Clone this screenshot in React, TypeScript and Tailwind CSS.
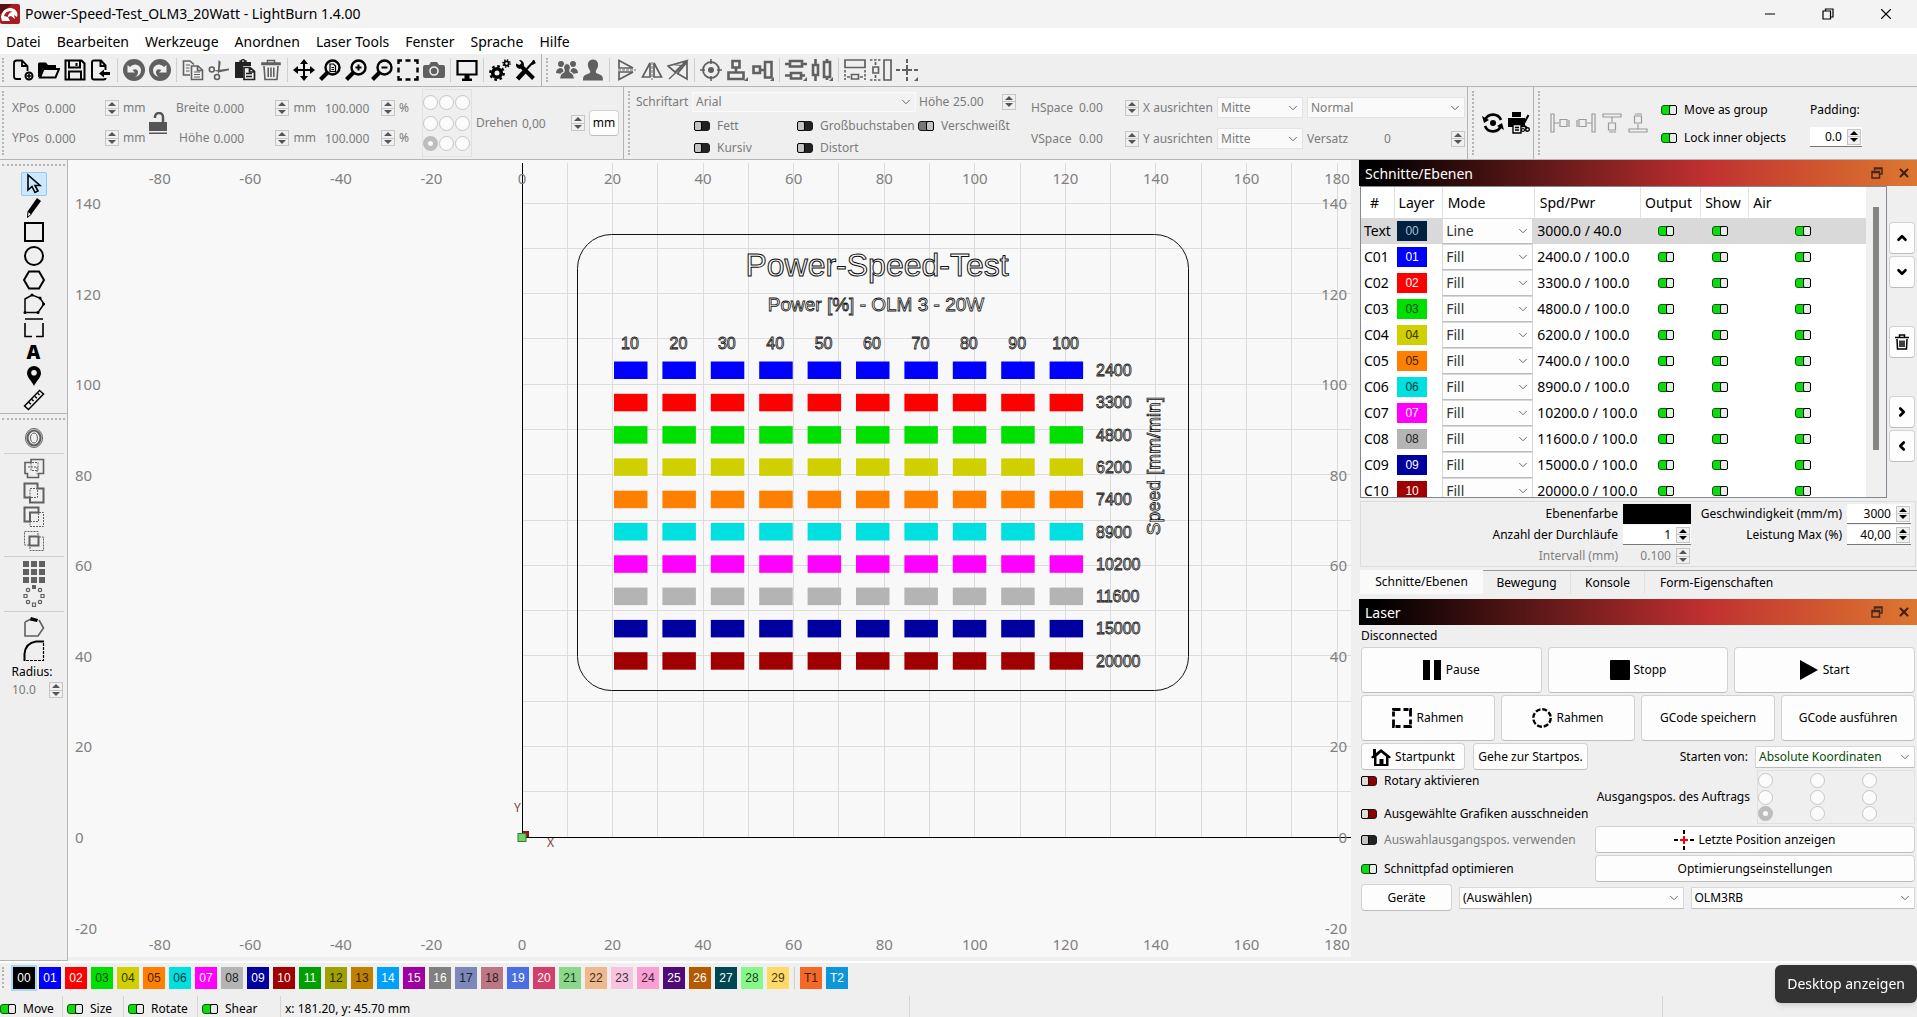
import React from 'react';
import clsx from 'clsx';
import { ChevronDown, ChevronLeft, ChevronRight, ChevronUp, Minus, X } from 'lucide-react';

const LAYERS = [
  { name: 'Text', id: '00', mode: 'Line', spd: '3000.0 / 40.0', swatch: 'bg-[#002040] text-[#a9bccb]' },
  { name: 'C01', id: '01', mode: 'Fill', spd: '2400.0 / 100.0', swatch: 'bg-[#0000ff] text-white' },
  { name: 'C02', id: '02', mode: 'Fill', spd: '3300.0 / 100.0', swatch: 'bg-[#ff0000] text-white' },
  { name: 'C03', id: '03', mode: 'Fill', spd: '4800.0 / 100.0', swatch: 'bg-[#00e000] text-[#10400c]' },
  { name: 'C04', id: '04', mode: 'Fill', spd: '6200.0 / 100.0', swatch: 'bg-[#d0d000] text-[#333300]' },
  { name: 'C05', id: '05', mode: 'Fill', spd: '7400.0 / 100.0', swatch: 'bg-[#ff8000] text-[#402000]' },
  { name: 'C06', id: '06', mode: 'Fill', spd: '8900.0 / 100.0', swatch: 'bg-[#00e0e0] text-[#003838]' },
  { name: 'C07', id: '07', mode: 'Fill', spd: '10200.0 / 100.0', swatch: 'bg-[#ff00ff] text-white' },
  { name: 'C08', id: '08', mode: 'Fill', spd: '11600.0 / 100.0', swatch: 'bg-[#b4b4b4] text-[#222222]' },
  { name: 'C09', id: '09', mode: 'Fill', spd: '15000.0 / 100.0', swatch: 'bg-[#0000a0] text-white' },
  { name: 'C10', id: '10', mode: 'Fill', spd: '20000.0 / 100.0', swatch: 'bg-[#a00000] text-white' },
];

const PALETTE = [
  ['00', 'bg-[#000000] text-white'],
  ['01', 'bg-[#0000ff] text-white'],
  ['02', 'bg-[#ff0000] text-white'],
  ['03', 'bg-[#00e000] text-[#10400c]'],
  ['04', 'bg-[#d0d000] text-[#333300]'],
  ['05', 'bg-[#ff8000] text-[#402000]'],
  ['06', 'bg-[#00e0e0] text-[#003838]'],
  ['07', 'bg-[#ff00ff] text-white'],
  ['08', 'bg-[#b4b4b4] text-[#222222]'],
  ['09', 'bg-[#0000a0] text-white'],
  ['10', 'bg-[#a00000] text-white'],
  ['11', 'bg-[#00a000] text-white'],
  ['12', 'bg-[#a0a000] text-[#222200]'],
  ['13', 'bg-[#c08000] text-[#302000]'],
  ['14', 'bg-[#00a0ff] text-white'],
  ['15', 'bg-[#a000a0] text-white'],
  ['16', 'bg-[#808080] text-white'],
  ['17', 'bg-[#7d87b9] text-[#1c2030]'],
  ['18', 'bg-[#bb7784] text-[#301c20]'],
  ['19', 'bg-[#4a6fe3] text-white'],
  ['20', 'bg-[#d33f6a] text-white'],
  ['21', 'bg-[#8cd78c] text-[#1c381c]'],
  ['22', 'bg-[#f0b98d] text-[#402c1c]'],
  ['23', 'bg-[#f6c4e1] text-[#40303a]'],
  ['24', 'bg-[#fa9ed4] text-[#402838]'],
  ['25', 'bg-[#500a78] text-white'],
  ['26', 'bg-[#b45a00] text-white'],
  ['27', 'bg-[#004754] text-white'],
  ['28', 'bg-[#86fa88] text-[#1c401c]'],
  ['29', 'bg-[#ffdb66] text-[#40381c]'],
];

const TOOL_COLORS = [
  ['T1', 'bg-[#f36926] text-[#401c0c]'],
  ['T2', 'bg-[#0c96d9] text-white'],
];

const ROWS = [
  { speed: '2400', color: '#0000ff' },
  { speed: '3300', color: '#ff0000' },
  { speed: '4800', color: '#00e000' },
  { speed: '6200', color: '#d0d000' },
  { speed: '7400', color: '#ff8000' },
  { speed: '8900', color: '#00e0e0' },
  { speed: '10200', color: '#ff00ff' },
  { speed: '11600', color: '#b4b4b4' },
  { speed: '15000', color: '#0000a0' },
  { speed: '20000', color: '#a00000' },
];

type IconProps = { children: React.ReactNode; className?: string };

const Icon: React.FC<IconProps> = ({ children, className = 'size-[22px]' }) => (
  <svg
    viewBox="0 0 22 22"
    className={clsx('shrink-0', className)}
    fill="none"
    stroke="currentColor"
    strokeWidth="2"
    aria-hidden="true"
  >
    {children}
  </svg>
);

const icons = {
  newFile: (
    <Icon>
      <path d="M9 20H4.500Q2 20 2 17.500V4Q2 1.500 4.500 1.500H10L15.500 7v5M10 1.500V7h5.500" strokeWidth="1.800" />
      <circle cx="17" cy="17" r="3.500" />
      <path d="M17 14.500v5M14.500 17h5" strokeWidth="1.500" />
    </Icon>
  ),
  open: (
    <Icon>
      <path d="M5.500 10H21l-3.500 8.500H2z" />
      <path d="M1 3.500h7l2 2.500h8v3H5L2 17 0 18.500V4.500z" fill="currentColor" stroke="none" />
    </Icon>
  ),
  save: (
    <Icon>
      <path d="M1.500 1.500h16l3 3v16h-19z" />
      <path d="M5 2v6.500h11V2M5 20.500v-8h12v8" />
      <path d="M12.500 4v3" />
    </Icon>
  ),
  importFile: (
    <Icon>
      <path d="M15.500 11V6.500L11 1.500H4Q2 1.500 2 3.500v15q0 2 2 2h9.500q2 0 2-1.500M10.500 1.500V7h5" />
      <path d="M9 14.500l5-4v2.500h6v3h-6v2.500z" fill="currentColor" stroke="none" />
    </Icon>
  ),
  undo: (
    <Icon>
      <circle cx="11" cy="11" r="11" fill="currentColor" stroke="none" />
      <path d="M4.500 6v7.500H12L9.500 11Q14 9 15 12.500q.5 3-3 5.500 6-1.500 6-7-.5-5-6-5.500-3 0-5 2.500z" fill="#efefef" stroke="none" />
    </Icon>
  ),
  redo: (
    <Icon>
      <circle cx="11" cy="11" r="11" fill="currentColor" stroke="none" />
      <path d="M17.500 6v7.500H10l2.500-2.500Q8 9 7 12.500q-.5 3 3 5.500-6-1.500-6-7 .5-5 6-5.500 3 0 5 2.500z" fill="#efefef" stroke="none" />
    </Icon>
  ),
  copy: (
    <Icon>
      <path d="M8 16H1.500V2H8l4 3.500" strokeWidth="1.600" />
      <path d="M9.500 7H16l4.500 4v9.500h-11zM15.500 7v4.500h5" strokeWidth="1.600" />
      <path d="M4 6h4M4 9h3.500M4 12h3.500M12 13h6M12 15.500h6M12 18h6" strokeWidth="1.200" />
    </Icon>
  ),
  cut: (
    <Icon>
      <circle cx="3.800" cy="10.500" r="2.500" strokeWidth="1.600" />
      <circle cx="9" cy="18" r="2.500" strokeWidth="1.600" />
      <path d="M6 11.500L21 9.500v1.800l-9.500 2zM9.800 15.800L10.500 1l2.200 2-1.400 10z" fill="currentColor" stroke="none" />
    </Icon>
  ),
  paste: (
    <Icon>
      <path d="M1 3h16v4H9v12H1z" fill="currentColor" stroke="none" />
      <path d="M6 3.500V2h1.500a1.500 1.500 0 013 0H12v1.500z" fill="#efefef" stroke="currentColor" strokeWidth="1.300" />
      <path d="M10 8.500h6l4.500 4v8H10zM15.500 8.500V13h5" fill="#efefef" strokeWidth="1.700" />
      <path d="M12 14.500h6M12 17.500h6" strokeWidth="1.300" />
    </Icon>
  ),
  trash: (
    <Icon>
      <path d="M2 5.500h18v-1.500H2zM7.500 3.500V1.500h7v2" strokeWidth="1.600" />
      <path d="M4 7l1 13.500h12L18 7M8.200 8.500v9.500M11 8.500v9.500M13.800 8.500v9.500" strokeWidth="1.600" />
    </Icon>
  ),
  pan: (
    <Icon>
      <path d="M11 2v18M2 11h18" />
      <path d="M11 0l4 5H7zM11 22l4-5H7zM0 11l5-4v8zM22 11l-5-4v8z" fill="currentColor" stroke="none" />
    </Icon>
  ),
  zoomPage: (
    <Icon>
      <circle cx="13.500" cy="8.500" r="7" strokeWidth="2.400" />
      <path d="M8.500 13.500L1.500 20.500" strokeWidth="4" />
      <path d="M11 5h3.500L16.500 7v5.500H11zM12.500 8.500h2.500M12.500 10.500h2.500" strokeWidth="1.200" />
    </Icon>
  ),
  zoomIn: (
    <Icon>
      <circle cx="13.500" cy="8.500" r="7" strokeWidth="2.400" />
      <path d="M8.500 13.500L1.500 20.500" strokeWidth="4" />
      <path d="M13.500 5.500v6M10.500 8.500h6" />
    </Icon>
  ),
  zoomOut: (
    <Icon>
      <circle cx="13.500" cy="8.500" r="7" strokeWidth="2.400" />
      <path d="M8.500 13.500L1.500 20.500" strokeWidth="4" />
      <path d="M10.500 8.500h6" />
    </Icon>
  ),
  frame: (
    <Icon>
      <path
        d="M1.500 5V1.500H5M8.500 1.500h5M17 1.500h3.500V5M20.500 8.500v5M20.500 17v3.500H17M13.500 20.500h-5M5 20.500H1.500V17M1.500 13.500v-5"
        strokeWidth="2.400"
      />
    </Icon>
  ),
  camera: (
    <Icon>
      <path d="M2 6h4l2-3h6l2 3h4q2 0 2 2v9q0 2-2 2H2q-2 0-2-2V8q0-2 2-2z" fill="currentColor" stroke="none" />
      <circle cx="11" cy="12" r="4" stroke="#efefef" strokeWidth="1.600" />
    </Icon>
  ),
  monitor: (
    <Icon>
      <path d="M1.500 2h19v13.500h-19z" strokeWidth="2.200" />
      <path d="M8.500 16h5v3.500H16V22H6v-2.500h2.500z" fill="currentColor" stroke="none" />
    </Icon>
  ),
  gears: (
    <Icon>
      <circle cx="8" cy="14" r="4.300" strokeWidth="3.600" />
      <circle cx="8" cy="14" r="6.800" strokeWidth="2.200" strokeDasharray="2.700 2.640" />
      <circle cx="17.500" cy="4.500" r="2.200" strokeWidth="1.800" />
      <circle cx="17.500" cy="4.500" r="3.600" strokeWidth="1.400" strokeDasharray="1.400 1.430" />
    </Icon>
  ),
  tools: (
    <Icon>
      <path d="M6 7L18.500 19.500" strokeWidth="4" />
      <path d="M1 4.500Q0.500 9 5 10l4-3.500Q9 1 4 1l2.500 3L4.500 6z" fill="currentColor" stroke="none" />
      <path d="M19.500 1.500L9 13" strokeWidth="2" />
      <path d="M9.500 12.500L2.500 20" strokeWidth="4.600" />
      <path d="M18 1l3 3-3.500 2-1-1z" fill="currentColor" stroke="none" />
    </Icon>
  ),
  group: (
    <Icon>
      <g fill="currentColor" stroke="none">
        <circle cx="5" cy="5" r="3" />
        <circle cx="17" cy="5" r="3" />
        <path d="M0 14q0-4 4-5 3 0 4 4l-2 2zM22 14q0-4-4-5-3 0-4 4l2 2z" />
      </g>
      <path
        d="M11 4.500a3.600 4 0 013 6q-.5 2 .2 2.500 4 1.500 4.300 7H3.500q.3-5.500 4.300-7 .7-.5.2-2.500a3.600 4 0 013-6z"
        fill="currentColor"
        stroke="#efefef"
        strokeWidth="1.200"
      />
    </Icon>
  ),
  user: (
    <Icon>
      <path
        d="M11 .5c4 0 5.500 3 5 6.500-.3 2-1.500 3.500-2.200 5-.3 2 .8 2.200 2.700 3 3.500 1.200 4.500 2 4.500 6.500H1C1 17 2 16.200 5.500 15c1.900-.8 3-1 2.700-3C7.500 10.500 6.300 9 6 7 5.500 3.500 7 .5 11 .5z"
        fill="currentColor"
        stroke="none"
      />
    </Icon>
  ),
  flipV: (
    <Icon>
      <path d="M4 1.500L18 9H4zM4 20.500L18 13H4z" strokeWidth="1.700" />
      <path d="M3 11h18" strokeWidth="1.500" strokeDasharray="3 1" opacity=".6" />
    </Icon>
  ),
  flipH: (
    <Icon>
      <path d="M1.500 18L9 4v14zM20.500 18L13 4v14z" strokeWidth="1.700" />
      <path d="M11 3v18" strokeWidth="1.500" strokeDasharray="3 1" opacity=".6" />
    </Icon>
  ),
  mirror: (
    <Icon>
      <path d="M1 7L19 2 8 13zM20 3v17L10.500 14.500z" strokeWidth="1.700" />
      <path d="M2 20L20 3M5 5.500l9 1" strokeWidth="1.200" />
    </Icon>
  ),
  focus: (
    <Icon>
      <circle cx="11" cy="11" r="8" strokeWidth="1.800" />
      <circle cx="11" cy="11" r="3" fill="currentColor" stroke="none" />
      <path d="M11 0v5M11 17v5M0 11h5M17 11h5" strokeWidth="1.600" />
    </Icon>
  ),
  alignCol: (
    <Icon>
      <path d="M6.500 2h7v6.500h-7zM2.500 13.500h15V20h-15zM10 8.500v5" strokeWidth="2.600" />
      <path d="M22 18v4h-4z" fill="currentColor" stroke="none" />
    </Icon>
  ),
  alignRow: (
    <Icon>
      <path d="M1.500 7.500H8V14H1.500zM13 3h6.500v15.500H13zM8 11h5" strokeWidth="2.600" />
      <path d="M22 18v4h-4z" fill="currentColor" stroke="none" />
    </Icon>
  ),
  distV: (
    <Icon>
      <path d="M5 2h12v5.500H5zM6 14h10v5.500H6zM0 5h5M17 5h5M0 16.500h6M16 16.500h4" strokeWidth="2.600" />
      <path d="M22 18v4h-4z" fill="currentColor" stroke="none" />
    </Icon>
  ),
  distH: (
    <Icon>
      <path d="M2 6h5v10H2zM13 3h6v15h-6zM4.500 0v6M4.500 16v6M16 0v3M16 18v3" strokeWidth="2.600" />
      <path d="M22 18v4h-4z" fill="currentColor" stroke="none" />
    </Icon>
  ),
  sameW: (
    <Icon>
      <path d="M1 1h20v7.500H1z" strokeWidth="1.700" />
      <path d="M1 11v10M21 11v10" strokeWidth="1.600" strokeDasharray="2.500 1.500" />
      <path d="M7.500 15.500h7v4.500h-7zM3 18h3M16 18h3" strokeWidth="1.700" />
    </Icon>
  ),
  sameH: (
    <Icon>
      <path d="M14 1h7v20h-7z" strokeWidth="1.700" />
      <path d="M0 1h11M0 21h11" strokeWidth="1.600" strokeDasharray="2.500 1.500" />
      <path d="M3 8h5.500v6H3zM5.500 3v3M5.500 16v3" strokeWidth="1.700" />
    </Icon>
  ),
  crosshair: (
    <Icon>
      <path d="M11 0v4M11 18v4M0 11h4M18 11h4M11 6v10M6 11h10" strokeWidth="2" />
      <path d="M22 18v4h-4z" fill="currentColor" stroke="none" />
    </Icon>
  ),
  rotaryRun: (
    <Icon>
      <path d="M3 8.500A8.500 8.500 0 0119 8M19 13.500A8.500 8.500 0 013 14" strokeWidth="2.600" />
      <circle cx="11" cy="11" r="3" fill="currentColor" stroke="none" />
      <path d="M0 4l2 7 5-3zM22 18l-2-7-5 3z" fill="currentColor" stroke="none" />
    </Icon>
  ),
  printCut: (
    <Icon>
      <path d="M4 0h9v5H4zM0 6h17v9H0z" fill="currentColor" stroke="none" />
      <path d="M5 12.500h8V21H5zM7 15.500h4M7 18h4" fill="#efefef" strokeWidth="1.400" />
      <path d="M20.500 3L14 15M13 11l6 5" strokeWidth="2" />
      <circle cx="19.500" cy="17.500" r="1.800" strokeWidth="1.400" />
      <circle cx="15" cy="18" r="1.500" strokeWidth="1.200" />
    </Icon>
  ),
  snapLeft: (
    <Icon>
      <path d="M2 2h3v18H2zM5 11h5M11 7.500h7v7h-7zM20 8v7" strokeWidth="1.200" />
    </Icon>
  ),
  snapRight: (
    <Icon>
      <path d="M17 2h3v18h-3zM17 11h-5M4 7.500h7v7H4zM2 8v7" strokeWidth="1.200" />
    </Icon>
  ),
  snapTop: (
    <Icon>
      <path d="M2 2h18v3H2zM11 5v5M7.500 11h7v7h-7zM8 20h7" strokeWidth="1.200" />
    </Icon>
  ),
  snapBottom: (
    <Icon>
      <path d="M2 17h18v3H2zM11 17v-5M7.500 4h7v7h-7zM8 2h7" strokeWidth="1.200" />
    </Icon>
  ),
  cursor: (
    <Icon>
      <path d="M5 2v15l4-3.500 3 6 3-1.500-3-5.500h5z" strokeWidth="1.600" />
    </Icon>
  ),
  pencil: (
    <Icon>
      <path d="M14 1l4 3-9.500 13-4-2.500z" fill="currentColor" stroke="none" />
      <path d="M5 14.500l3.500 2.500-4 3.500z" strokeWidth="1" />
    </Icon>
  ),
  square: (
    <Icon>
      <path d="M2 2h18v18H2z" strokeWidth="2" />
    </Icon>
  ),
  circle: (
    <Icon>
      <circle cx="11" cy="11" r="9" />
    </Icon>
  ),
  hexagon: (
    <Icon>
      <path d="M6 2.500h10L21 11l-5 8.500H6L1 11z" />
    </Icon>
  ),
  polygon: (
    <Icon>
      <path d="M2 6l7-4 8 3 4 6-6 8.500H2z" strokeWidth="1.500" />
      <g fill="currentColor" stroke="none">
        <circle cx="9" cy="2" r="1.500" />
        <circle cx="17" cy="5" r="1.500" />
        <circle cx="20.500" cy="11" r="1.500" />
        <circle cx="15" cy="19.500" r="1.500" />
        <circle cx="2" cy="19.500" r="1.500" />
      </g>
    </Icon>
  ),
  tabs: (
    <Icon>
      <path d="M2 2h18M2 6v13.500h7M20 6v13.500h-7" strokeWidth="1.600" />
    </Icon>
  ),
  pin: (
    <Icon>
      <path
        d="M11 1a7 7 0 017 7c0 4.500-5 8.500-7 13-2-4.500-7-8.500-7-13a7 7 0 017-7zm0 4a2.800 2.800 0 100 5.600A2.800 2.800 0 0011 5z"
        fill="currentColor"
        fillRule="evenodd"
        stroke="none"
      />
    </Icon>
  ),
  ruler: (
    <Icon>
      <path d="M1.500 17L16.500 1.500l4 3.500L5.500 20.500zM6 13.500l2 1.800M9 10.500l1.500 1.500M12 7.500l2 1.800M15 4.500l1.500 1.500" strokeWidth="1.500" />
    </Icon>
  ),
  offset: (
    <Icon>
      <ellipse cx="11" cy="11" rx="8.500" ry="9.500" strokeWidth="1" />
      <ellipse cx="11" cy="11" rx="6.500" ry="7.500" strokeWidth="2.200" />
      <ellipse cx="11" cy="11" rx="3.500" ry="5" strokeWidth="1" />
    </Icon>
  ),
  weld: (
    <Icon>
      <path d="M2 4.500h6V1.500h12.500v14h-5v4h-11v-4H2z" strokeWidth="1.600" />
      <path d="M8 4.500v8h7v-8zM5 9h9v7" strokeWidth="1" strokeDasharray="2 1" />
    </Icon>
  ),
  union: (
    <Icon>
      <path d="M1.500 1.500h13v5h6v14H7v-5H1.500z" />
      <path d="M7 15.500v-9h7.500v9z" strokeWidth="1" strokeDasharray="2 1" />
    </Icon>
  ),
  subtract: (
    <Icon>
      <path d="M1.500 1.500h14v5H7v9H1.500z" />
      <path d="M16 6.500h4.500v14H7v-5M15.500 7v8.500H7" strokeWidth="1" strokeDasharray="2 1" />
    </Icon>
  ),
  intersect: (
    <Icon>
      <path d="M6.500 6.500h9v9h-9z" />
      <path d="M6 15H1.500V1.500H15V6M16 7h4.500v13.500H7V16" strokeWidth="1" strokeDasharray="2 1" />
    </Icon>
  ),
  gridArray: (
    <Icon>
      <path
        d="M0 0h6v6H0zM8 0h6v6H8zM16 0h6v6h-6zM0 8h6v6H0zM8 8h6v6H8zM16 8h6v6h-6zM0 16h6v6H0zM8 16h6v6H8zM16 16h6v6h-6z"
        fill="currentColor"
        stroke="none"
      />
    </Icon>
  ),
  circleArray: (
    <Icon>
      <path d="M9 0h4v4H9z" fill="currentColor" stroke="none" />
      <g strokeWidth="1.200">
        <path d="M9.500 18h3v3.500h-3zM1 9.500h3v3H1zM18 9.500h3v3h-3z" />
        <circle cx="5" cy="5" r="1.700" />
        <circle cx="17" cy="5" r="1.700" />
        <circle cx="5" cy="17" r="1.700" />
        <circle cx="17" cy="17" r="1.700" />
      </g>
    </Icon>
  ),
  startPoint: (
    <Icon>
      <path d="M2 6l6-3M16 4l4.500 8L15 20H2V6" strokeWidth="1.600" />
      <path d="M8 1l7 2-1 3-7-1.500z" fill="#000" stroke="none" />
    </Icon>
  ),
  radius: (
    <Icon>
      <path d="M1.500 21V14Q2.500 3 13 1.500h8" stroke="#000" strokeWidth="2" />
      <path d="M20.500 3v17.500H2" stroke="#000" strokeWidth="1.200" strokeDasharray="3 1" />
    </Icon>
  ),
};

const MAIN_TOOLS: { dark: boolean; items: [string, React.ReactNode][] }[] = [
  { dark: true, items: [['Neu', icons.newFile], ['Öffnen', icons.open], ['Speichern', icons.save], ['Import', icons.importFile]] },
  { dark: false, items: [['Rückgängig', icons.undo], ['Wiederholen', icons.redo]] },
  { dark: false, items: [['Kopieren', icons.copy], ['Ausschneiden', icons.cut], ['Einfügen', <span className="text-[#222]">{icons.paste}</span>], ['Löschen', icons.trash]] },
  {
    dark: true,
    items: [
      ['Verschieben', icons.pan],
      ['Seite zoomen', icons.zoomPage],
      ['Vergrößern', icons.zoomIn],
      ['Verkleinern', icons.zoomOut],
      ['Auswahl zoomen', icons.frame],
      ['Kamera', <span className="text-[#606060]">{icons.camera}</span>],
    ],
  },
  { dark: true, items: [['Vorschau', icons.monitor]] },
  { dark: true, items: [['Einstellungen', icons.gears], ['Geräteeinstellungen', icons.tools]] },
];

const ARRANGE_TOOLS: { dark: boolean; items: [string, React.ReactNode][] }[] = [
  { dark: false, items: [['Gruppieren', icons.group], ['Gruppierung aufheben', icons.user]] },
  { dark: false, items: [['Vertikal spiegeln', icons.flipV], ['Horizontal spiegeln', icons.flipH], ['An Linie spiegeln', icons.mirror]] },
  { dark: false, items: [['Zentrieren', icons.focus], ['Spalte ausrichten', icons.alignCol], ['Zeile ausrichten', icons.alignRow]] },
  { dark: false, items: [['Vertikal verteilen', icons.distV], ['Horizontal verteilen', icons.distH]] },
  { dark: false, items: [['Gleiche Breite', icons.sameW], ['Gleiche Höhe', icons.sameH], ['Laserposition', icons.crosshair]] },
];

const ToolGroups: React.FC<{ groups: typeof MAIN_TOOLS }> = ({ groups }) => (
  <>
    {groups.map((group, i) => (
      <div key={i} className="flex items-center">
        {i > 0 && <div className="mx-[3px] h-6 w-px bg-[#cfcfcf]" />}
        {group.items.map(([label, icon]) => (
          <button
            key={label}
            aria-label={label}
            className={clsx('flex h-6 w-[26px] items-center justify-center', group.dark ? 'text-black' : 'text-[#606060]')}
          >
            {icon}
          </button>
        ))}
      </div>
    ))}
  </>
);

const Handle: React.FC<{ className?: string }> = ({ className }) => (
  <div className={clsx('my-1 w-0 shrink-0 border-l-2 border-dotted border-[#b5b5b5]', className)} />
);

const Toggle: React.FC<{ label: string; on?: boolean; off?: 'red' | 'black'; hideLabel?: boolean; dim?: boolean }> = ({
  label,
  on = false,
  off = 'black',
  hideLabel = false,
  dim = false,
}) => (
  <label className={clsx('flex items-center gap-[7px] whitespace-nowrap', dim && 'text-[#7b7b7b]')}>
    <input
      type="checkbox"
      aria-label={label}
      defaultChecked={on}
      className={clsx(
        'flex h-[10px] w-4 shrink-0 appearance-none rounded-[3px] border border-[#1c1c1c] before:-m-px before:w-2 before:rounded-[2px] before:border before:border-black checked:justify-end',
        off === 'red' ? 'bg-[#900000] before:bg-[#e6dada]' : 'bg-[#222] before:bg-[#c4c4c4]',
        dim ? 'checked:bg-[#777]' : 'checked:border-[#0a5a0a] checked:bg-[#0bdc0b] checked:before:bg-[#e3efe3]',
      )}
    />
    {!hideLabel && <span>{label}</span>}
  </label>
);

const Stepper: React.FC<{ label: string; dim?: boolean }> = ({ label, dim }) => (
  <span className={clsx('flex h-4 w-[14px] shrink-0 flex-col border border-[#c6c6c6] bg-[#f0f0f0]', dim ? 'text-[#555]' : 'text-black')}>
    <button aria-label={`${label} erhöhen`} className="flex flex-1 items-center justify-center border-b border-[#c6c6c6]">
      <svg viewBox="0 0 8 4" className="h-1 w-2" fill="currentColor"><path d="M4 0l4 4H0z" /></svg>
    </button>
    <button aria-label={`${label} verringern`} className="flex flex-1 items-center justify-center">
      <svg viewBox="0 0 8 4" className="h-1 w-2" fill="currentColor"><path d="M4 4l4-4H0z" /></svg>
    </button>
  </span>
);

type SpinProps = { label: string; value: string; width: string; labelClass?: string; inputClass?: string; unit?: string; hideLabel?: boolean };

// number field of the upper toolbars
const Spin: React.FC<SpinProps> = ({ label, value, width, labelClass, inputClass, unit, hideLabel }) => (
  <div className="flex items-center gap-[3px]">
    <label className="flex items-center gap-1">
      {!hideLabel && <span className={labelClass}>{label}</span>}
      <input aria-label={label} defaultValue={value} className={clsx('h-5 bg-transparent', width, inputClass)} />
    </label>
    <Stepper label={label} dim />
    {unit && <span className="ml-px">{unit}</span>}
  </div>
);

// white number field with an underline
const Field: React.FC<{ id: string; label: string; value: string; dim?: boolean; className?: string }> = ({ id, label, value, dim, className }) => (
  <div className={clsx('flex h-5 items-center pr-px', dim ? 'text-[#808080]' : 'border-b border-[#777] bg-white', className)}>
    <input id={id} defaultValue={value} aria-label={label} className="w-0 flex-1 bg-transparent pr-[5px] text-right" />
    <Stepper label={label} dim={dim} />
  </div>
);

const Select: React.FC<{ label: string; value: string; className?: string; selectClass?: string }> = ({ label, value, className, selectClass }) => (
  <div className={clsx('relative', className)}>
    <select
      aria-label={label}
      className={clsx('block h-full w-full appearance-none border pr-6 pl-[3px]', selectClass ?? 'border-[#e4e4e4] bg-[#fafafa]')}
    >
      <option>{value}</option>
    </select>
    <ChevronDown className="pointer-events-none absolute top-1/2 right-[3px] size-[14px] -translate-y-1/2 text-[#555]" strokeWidth={1.5} />
  </div>
);

const RadioGrid: React.FC<{ name: string; className: string }> = ({ name, className }) => (
  <div role="radiogroup" aria-label={name} className={clsx('grid grid-cols-3 border border-[#e0e0e0]', className)}>
    {Array.from({ length: 9 }, (_, i) => (
      <input
        key={i}
        type="radio"
        name={name}
        aria-label={`${name} ${i + 1}`}
        defaultChecked={i === 6}
        className="size-[15px] appearance-none rounded-full border border-[#c6c6c6] bg-[#fbfbfb] checked:border-[5px] checked:border-[#bdbdbd]"
      />
    ))}
  </div>
);

const DockTitle: React.FC<{ title: string }> = ({ title }) => (
  <div className="flex h-[26px] items-center bg-[linear-gradient(90deg,#000_3%,#c03030_62%,#dd7730_100%)] px-[6px] text-[14px] text-white">
    <h2 className="flex-1">{title}</h2>
    <button aria-label={`${title} abdocken`} className="text-[#4a2818]">
      <svg viewBox="0 0 12 12" className="size-3" fill="none" stroke="currentColor" strokeWidth="1.500">
        <path d="M3.500 3.500V1h7.500v6H8.500M1 4.500h7.500V11H1zM1 5.500h7.500M3.500 1.800H11" />
      </svg>
    </button>
    <button aria-label={`${title} schließen`} className="ml-[14px] text-[#3c2216]">
      <X className="size-[14px]" strokeWidth={3.5} />
    </button>
  </div>
);

const PushButton: React.FC<{ children: React.ReactNode; className?: string; label?: string }> = ({ children, className, label }) => (
  <button
    aria-label={label}
    className={clsx(
      'flex items-center justify-center gap-1 rounded border border-[#d2d2d2] border-b-[#bdbdbd] bg-[#fdfdfd] whitespace-nowrap',
      className,
    )}
  >
    {children}
  </button>
);

const TitleBar: React.FC = () => (
  <header className="flex h-7 items-center bg-[#f3f3f3] pr-[2px] pb-px">
    <svg viewBox="0 0 20 20" className="size-5" aria-hidden="true">
      <rect width="20" height="20" rx="2" fill="#a81c24" />
      <path d="M0 0h12L0 10z" fill="#5a1014" />
      <path d="M1 13C2 6 8 2 14 5c3 1.500 4 5 3 8l-3-2 1 4-4-3-3 1 2 4H2z" fill="#fff" />
      <path d="M4 12c1-4 5-6 9-4-3 0-5 2-5 5z" fill="#a81c24" />
    </svg>
    <h1 className="ml-[5px] flex-1 text-[14px]">Power-Speed-Test_OLM3_20Watt - LightBurn 1.4.00</h1>
    <button aria-label="Minimieren" className="flex w-[58px] justify-center"><Minus className="size-4" strokeWidth={1.5} /></button>
    <button aria-label="Wiederherstellen" className="flex w-[58px] justify-center">
      <svg viewBox="0 0 12 12" className="size-3" fill="none" stroke="currentColor" strokeWidth="1.200">
        <path d="M1 3h7.500v8H1zM3.500 3V1H11v8H8.500" />
      </svg>
    </button>
    <button aria-label="Schließen" className="flex w-[58px] justify-center"><X className="size-[18px]" strokeWidth={1.5} /></button>
  </header>
);

const MENU = ['Datei', 'Bearbeiten', 'Werkzeuge', 'Anordnen', 'Laser Tools', 'Fenster', 'Sprache', 'Hilfe'];

const MenuBar: React.FC = () => (
  <nav className="flex h-[26px] items-center gap-4 bg-white pl-[6px] text-[14px]">
    {MENU.map((item) => (
      <button key={item}>{item}</button>
    ))}
  </nav>
);

const PropertyBar: React.FC = () => (
  <div className="flex h-[73px] border-b border-[#b4b4b4] text-[12px] text-[#7b7b7b]">
    <section className="flex w-[624px] shrink-0 items-center border-r border-[#b4b4b4] pl-[2px]">
      <Handle className="self-stretch" />
      <div className="ml-2 flex flex-col gap-[10px]">
        <Spin label="XPos" value="0.000" width="w-[57px]" labelClass="w-[29px]" unit="mm" />
        <Spin label="YPos" value="0.000" width="w-[57px]" labelClass="w-[29px]" unit="mm" />
      </div>
      <button aria-label="Seitenverhältnis sperren" className="ml-1 text-[#555]">
        <svg viewBox="0 0 18 22" className="h-[22px] w-[18px]">
          <path d="M0 10h18v9H0zM0 20.500h18V22H0z" fill="currentColor" />
          <path d="M6 6V5a4 4 0 018 0v5" fill="none" stroke="currentColor" strokeWidth="2.500" />
        </svg>
      </button>
      <div className="ml-2 flex flex-col gap-[10px]">
        <Spin label="Breite" value="0.000" width="w-[59px]" labelClass="w-[34px] text-right" unit="mm" />
        <Spin label="Höhe" value="0.000" width="w-[59px]" labelClass="w-[34px] text-right" unit="mm" />
      </div>
      <div className="ml-[9px] flex flex-col gap-[10px]">
        <Spin label="Breite in Prozent" value="100.000" width="w-[53px]" hideLabel unit="%" />
        <Spin label="Höhe in Prozent" value="100.000" width="w-[53px]" hideLabel unit="%" />
      </div>
      <RadioGrid name="Ankerpunkt" className="ml-[13px] h-[68px] w-[50px] content-evenly justify-items-center" />
      <div className="ml-1"><Spin label="Drehen" value="0,00" width="w-[46px]" labelClass="w-[42px]" /></div>
      <PushButton className="ml-1 h-[26px] w-[30px] text-black">mm</PushButton>
    </section>

    <section className="flex min-w-[844px] flex-1 items-center border-r border-[#b4b4b4] pl-1">
      <Handle className="self-stretch" />
      <div className="ml-[6px] flex flex-1 flex-col gap-[5px] pt-[2px]">
        <div className="flex items-center">
          <span className="w-[56px]">Schriftart</span>
          <Select label="Schriftart" value="Arial" className="h-5 w-[224px]" selectClass="border-[#fafafa] bg-[#f2f2f2]" />
          <div className="ml-[3px]"><Spin label="Höhe" value="25.00" width="w-[46px]" labelClass="w-[30px]" /></div>
        </div>
        <div className="grid grid-cols-[103px_121px_auto] gap-y-1 pl-[58px]">
          <Toggle label="Fett" />
          <Toggle label="Großbuchstaben" />
          <Toggle label="Verschweißt" on dim />
          <Toggle label="Kursiv" />
          <Toggle label="Distort" />
        </div>
      </div>
      <div className="flex flex-col gap-[10px] pr-[2px]">
        <div className="flex items-center">
          <Spin label="HSpace" value="0.00" width="w-[43px]" labelClass="w-[44px]" />
          <span className="w-[78px] pl-1 whitespace-nowrap">X ausrichten</span>
          <Select label="X ausrichten" value="Mitte" className="h-[21px] w-[86px]" />
          <Select label="Textmodus" value="Normal" className="ml-1 h-[21px] w-[158px]" />
        </div>
        <div className="flex items-center">
          <Spin label="VSpace" value="0.00" width="w-[43px]" labelClass="w-[44px]" />
          <span className="w-[78px] pl-1 whitespace-nowrap">Y ausrichten</span>
          <Select label="Y ausrichten" value="Mitte" className="h-[21px] w-[86px]" />
          <div className="ml-1"><Spin label="Versatz" value="0" width="w-[92px]" inputClass="pl-7" labelClass="w-[45px]" /></div>
        </div>
      </div>
    </section>

    <section className="flex w-[66px] shrink-0 items-center border-r border-[#b4b4b4] pl-1 text-black">
      <Handle className="self-stretch" />
      <button aria-label="Rotary ausführen" className="ml-[8px]">{icons.rotaryRun}</button>
      <button aria-label="Print and Cut" className="ml-1">{icons.printCut}</button>
    </section>

    <section className="flex w-[383px] shrink-0 items-center pl-1 text-black">
      <Handle className="self-stretch" />
      <div className="ml-[9px] flex gap-1 text-[#9a9a9a]">
        <button aria-label="Links anlegen">{icons.snapLeft}</button>
        <button aria-label="Rechts anlegen">{icons.snapRight}</button>
        <button aria-label="Oben anlegen">{icons.snapTop}</button>
        <button aria-label="Unten anlegen">{icons.snapBottom}</button>
      </div>
      <div className="ml-3 flex flex-col gap-[10px] pt-[2px]">
        <Toggle label="Move as group" on />
        <Toggle label="Lock inner objects" on />
      </div>
      <div className="ml-6 flex flex-col gap-2 pt-[2px]">
        <label htmlFor="padding">Padding:</label>
        <Field id="padding" label="Padding" value="0.0" className="w-[52px]" />
      </div>
    </section>
  </div>
);

const SideButton: React.FC<{ label: string; children: React.ReactNode; active?: boolean }> = ({ label, children, active }) => (
  <button
    aria-label={label}
    className={clsx('flex h-6 w-[26px] items-center justify-center', active && 'rounded-xs border border-[#90c8f6] bg-[#cce8ff]')}
  >
    {children}
  </button>
);

const DRAW_TOOLS: [string, React.ReactNode][] = [
  ['Auswählen', icons.cursor],
  ['Linien zeichnen', icons.pencil],
  ['Rechteck', icons.square],
  ['Ellipse', icons.circle],
  ['Polygon', icons.hexagon],
  ['Knoten bearbeiten', icons.polygon],
  ['Stege', icons.tabs],
  ['Text', <span className="font-['Open_Sans',sans-serif] text-[19px] leading-none font-extrabold">A</span>],
  ['Position', icons.pin],
  ['Messen', icons.ruler],
];

const SideRule = () => <div className="my-[3px] h-px w-[60px] bg-[#cfcfcf]" />;

const SideBar: React.FC = () => (
  <aside className="flex w-[68px] shrink-0 flex-col border-r border-b border-[#b4b4b4] text-[12px]">
    <div className="mx-[2px] mt-1 border-t-2 border-dotted border-[#b5b5b5]" />
    <div className="mt-[6px] flex flex-col items-center">
      {DRAW_TOOLS.map(([label, icon], i) => (
        <SideButton key={label} label={label} active={i === 0}>{icon}</SideButton>
      ))}
    </div>
    <div className="mt-px border-t border-[#b4b4b4]" />
    <div className="mx-[2px] mt-1 border-t-2 border-dotted border-[#b5b5b5]" />
    <div className="mt-[6px] flex flex-col items-center text-[#606060]">
      <SideButton label="Versatz">{icons.offset}</SideButton>
      <SideRule />
      <SideButton label="Schweißen">{icons.weld}</SideButton>
      <SideButton label="Vereinigen">{icons.union}</SideButton>
      <SideButton label="Subtrahieren">{icons.subtract}</SideButton>
      <SideButton label="Schnittmenge">{icons.intersect}</SideButton>
      <SideRule />
      <SideButton label="Rasteranordnung">{icons.gridArray}</SideButton>
      <SideButton label="Kreisanordnung">{icons.circleArray}</SideButton>
      <SideRule />
      <SideButton label="Startpunkt setzen">{icons.startPoint}</SideButton>
      <SideButton label="Radius">{icons.radius}</SideButton>
    </div>
    <label htmlFor="radius" className="pr-[3px] text-center">Radius:</label>
    <div className="flex items-center pr-1 pl-3 text-[#7b7b7b]">
      <input id="radius" defaultValue="10.0" className="w-0 flex-1 bg-transparent" />
      <Stepper label="Radius" dim />
    </div>
  </aside>
);

// pixels per millimetre and position of the machine origin in the work area
const SCALE = 4.528;
const OX = 454;
const OY = 677;

const WorkArea: React.FC = () => {
  const xs = Array.from({ length: 20 }, (_, i) => i * 10);
  const ys = Array.from({ length: 15 }, (_, i) => i * 10);
  const xLabels = [-80, -60, -40, -20, 0, 20, 40, 60, 80, 100, 120, 140, 160, 180];
  const yLabels = [140, 120, 100, 80, 60, 40, 20, 0, -20];
  return (
    <div className="min-w-0 flex-1 border-b-4 border-[#efefef] bg-[#f8f8f8]">
      <svg
        viewBox="0 0 1283 796"
        preserveAspectRatio="xMinYMin meet"
        className="block h-full w-full font-['Noto_Sans',sans-serif]"
      >
        <g stroke="#dcdcdc" strokeWidth="1" shapeRendering="crispEdges">
          {xs.map((x) => (
            <line key={x} x1={OX + x * SCALE} x2={OX + x * SCALE} y1="3" y2={OY} />
          ))}
          {ys.map((y) => (
            <line key={y} x1={OX} x2="1283" y1={OY - y * SCALE} y2={OY - y * SCALE} />
          ))}
        </g>
        <g stroke="#000" shapeRendering="crispEdges">
          <line x1={OX} x2={OX} y1="3" y2={OY} />
          <line x1={OX} x2="1283" y1={OY} y2={OY} />
        </g>
        <rect x="455" y="671" width="6" height="6" fill="#901818" />
        <rect x="450" y="673.500" width="8" height="8" fill="#70d070" stroke="#308030" />

        <g fill="#808080" fontSize="15">
          {xLabels.map((x) => (
            <React.Fragment key={x}>
              <text x={OX + x * SCALE} y="24" textAnchor="middle">{x}</text>
              <text x={OX + x * SCALE} y="790" textAnchor="middle">{x}</text>
            </React.Fragment>
          ))}
          {yLabels.map((y) => (
            <React.Fragment key={y}>
              <text x="7" y={OY + 6 - y * SCALE}>{y}</text>
              <text x="1279" y={OY + 6 - y * SCALE} textAnchor="end">{y}</text>
            </React.Fragment>
          ))}
        </g>
        <g fill="#804040" fontSize="12">
          <text x="446" y="652">Y</text>
          <text x="479" y="687">X</text>
        </g>

        <rect x="509.500" y="74.500" width="611" height="456" rx="34" fill="none" stroke="#111" />
        <g fill="#f8f8f8" stroke="#111" className="font-['Liberation_Sans',sans-serif]">
          <text x="809" y="116" fontSize="32" textAnchor="middle" strokeWidth="1">Power-Speed-Test</text>
          <g fontSize="19" strokeWidth=".8" textAnchor="middle">
            <text x="808" y="151">Power [%] - OLM 3 - 20W</text>
            <text transform="translate(1092 306) rotate(-90)">Speed [mm/min]</text>
          </g>
          <g fontSize="16" strokeWidth=".8">
            {ROWS.map((row, i) => (
              <text key={row.speed} x={562 + i * 48.4} y="189" textAnchor="middle">{(i + 1) * 10}</text>
            ))}
            {ROWS.map((row, i) => (
              <text key={row.speed} x="1028" y={216 + i * 32.300}>{row.speed}</text>
            ))}
          </g>
        </g>
        {ROWS.map((row, i) => (
          <g key={row.speed} fill={row.color}>
            {ROWS.map((col, j) => (
              <rect key={col.speed} x={546 + j * 48.4} y={201.500 + i * 32.300} width="33.500" height="17.500" />
            ))}
          </g>
        ))}
      </svg>
    </div>
  );
};

const CutsPanel: React.FC = () => (
  <section>
    <DockTitle title="Schnitte/Ebenen" />
    <div className="flex">
      <div className="ml-px flex h-[312px] flex-1 overflow-hidden border border-[#828790] bg-white">
        <table className="flex-1 table-fixed self-start text-left text-[14px] leading-5">
          <colgroup>
            <col className="w-[33px]" />
            <col className="w-12" />
            <col className="w-[92px]" />
            <col className="w-[106px]" />
            <col className="w-[60px]" />
            <col className="w-12" />
            <col className="w-[117px]" />
          </colgroup>
          <thead>
            <tr className="h-[31px]">
              <th className="border-r border-[#e2e2e2] pl-[9px] font-normal">#</th>
              <th className="border-r border-[#e2e2e2] pl-[4px] font-normal">Layer</th>
              <th className="border-r border-[#e2e2e2] pl-[5px] font-normal">Mode</th>
              <th className="border-r border-[#e2e2e2] pl-[5px] font-normal">Spd/Pwr</th>
              <th className="border-r border-[#e2e2e2] pl-[4px] font-normal">Output</th>
              <th className="border-r border-[#e2e2e2] pl-[4px] font-normal">Show</th>
              <th className="pl-[4px] font-normal">Air</th>
            </tr>
          </thead>
          <tbody>
            {LAYERS.map((layer, i) => (
              <tr key={layer.id} className={clsx('h-[26px]', i === 0 && 'bg-[#d9d9d9]')}>
                <td className="p-0 pl-[3px]">{layer.name}</td>
                <td className="p-0 pl-[3px]">
                  <div className={clsx("flex h-5 w-[30px] items-center justify-center font-['Liberation_Sans',sans-serif] text-[12px]", layer.swatch)}>
                    {layer.id}
                  </div>
                </td>
                <td className="p-0">
                  <Select
                    label={`Mode ${layer.id}`}
                    value={layer.mode}
                    className="h-[26px] w-[91px]"
                    selectClass="border-[#d8d8d8] border-b-[#bdbdbd] bg-[#fdfdfd] text-[#333]"
                  />
                </td>
                <td className="p-0 pl-[3px] whitespace-nowrap">{layer.spd}</td>
                <td className="p-0 pl-[17px]"><Toggle label={`Output ${layer.id}`} on hideLabel /></td>
                <td className="p-0 pl-[11px]"><Toggle label={`Show ${layer.id}`} on hideLabel /></td>
                <td className="p-0 pl-[46px]"><Toggle label={`Air ${layer.id}`} on hideLabel /></td>
              </tr>
            ))}
          </tbody>
        </table>
        <div className="flex w-5 justify-center bg-[#f0f0f0] pt-5">
          <div className="h-[243px] w-[6px] bg-[#858585]" />
        </div>
      </div>
      <div className="flex w-[30px] flex-col pl-[2px]">
        <PushButton label="Nach oben" className="mt-[36px] h-8 w-[26px]"><ChevronUp className="size-[14px]" strokeWidth={4.500} /></PushButton>
        <PushButton label="Nach unten" className="mt-[2px] h-8 w-[26px]"><ChevronDown className="size-[14px]" strokeWidth={4.500} /></PushButton>
        <PushButton label="Löschen" className="mt-[38px] h-8 w-[26px]">
          <svg viewBox="0 0 14 16" className="h-4 w-[14px]" fill="none" stroke="currentColor" strokeWidth="1.500">
            <path d="M0 3.500h14M4.500 3V1h5v2M2 5l.5 10h9L12 5M5 6.500v6.500M7 6.500v6.500M9 6.500v6.500" />
          </svg>
        </PushButton>
        <PushButton label="Nach rechts" className="mt-[38px] h-8 w-[26px]"><ChevronRight className="size-[14px]" strokeWidth={4.500} /></PushButton>
        <PushButton label="Nach links" className="mt-[2px] h-8 w-[26px]"><ChevronLeft className="size-[14px]" strokeWidth={4.500} /></PushButton>
      </div>
    </div>

    <div className="mx-px mt-[3px] grid h-[66px] grid-cols-[1fr_68px_146px_64px] content-start gap-x-[5px] gap-y-px border border-[#dcdcdc] pt-[2px] pr-1 text-right text-[12px] leading-5">
      <label htmlFor="color">Ebenenfarbe</label>
      <button id="color" aria-label="Ebenenfarbe" className="h-5 bg-black" />
      <label htmlFor="speed">Geschwindigkeit (mm/m)</label>
      <Field id="speed" label="Geschwindigkeit" value="3000" />
      <label htmlFor="passes">Anzahl der Durchläufe</label>
      <Field id="passes" label="Anzahl der Durchläufe" value="1" />
      <label htmlFor="power">Leistung Max (%)</label>
      <Field id="power" label="Leistung Max" value="40,00" />
      <label htmlFor="interval" className="text-[#808080]">Intervall (mm)</label>
      <Field id="interval" label="Intervall" value="0.100" dim />
    </div>

    <div role="tablist" className="mt-[3px] ml-px flex h-6 text-[12px]">
      <button role="tab" aria-selected="true" className="w-[123px] bg-[#fafafa]">Schnitte/Ebenen</button>
      <div className="flex flex-1 border-t border-[#9a9a9a]">
        <button role="tab" className="w-[88px] border-r border-[#e0e0e0]">Bewegung</button>
        <button role="tab" className="w-[74px] border-r border-[#e0e0e0]">Konsole</button>
        <button role="tab" className="w-[143px]">Form-Eigenschaften</button>
      </div>
    </div>
  </section>
);

const LaserPanel: React.FC = () => (
  <section className="mt-[5px] text-[12px]">
    <DockTitle title="Laser" />
    <div className="flex flex-col px-[2px]">
      <p className="h-[22px] leading-[22px]">Disconnected</p>
      <div className="grid grid-cols-3 gap-[6px]">
        <PushButton className="h-[46px]">
          <svg viewBox="0 0 18 20" className="mr-px h-5 w-[18px]"><path d="M0 0h7v20H0zM11 0h7v20h-7z" /></svg>
          Pause
        </PushButton>
        <PushButton className="h-[46px]">
          <svg viewBox="0 0 20 20" className="size-5"><rect width="20" height="20" rx="1" /></svg>
          Stopp
        </PushButton>
        <PushButton className="h-[46px]">
          <svg viewBox="0 0 18 20" className="mr-px h-5 w-[18px]"><path d="M0 0l18 10L0 20z" /></svg>
          Start
        </PushButton>
      </div>
      <div className="mt-[2px] grid grid-cols-4 gap-[6px]">
        <PushButton className="h-[46px]">
          <svg viewBox="0 0 20 20" className="size-5" fill="none" stroke="currentColor" strokeWidth="2.800">
            <path d="M1.500 8.500v-7h7M11.500 1.500h7v7M18.500 11.500v7h-7M8.500 18.500h-7v-7" strokeDasharray="5 1 9" />
          </svg>
          Rahmen
        </PushButton>
        <PushButton className="h-[46px]">
          <svg viewBox="0 0 20 20" className="size-5" fill="none" stroke="currentColor" strokeWidth="2.400">
            <circle cx="10" cy="10" r="8.700" strokeDasharray="5 1.830" />
          </svg>
          Rahmen
        </PushButton>
        <PushButton className="h-[46px]">GCode speichern</PushButton>
        <PushButton className="h-[46px]">GCode ausführen</PushButton>
      </div>
      <div className="mt-[2px] flex items-center">
        <PushButton className="h-[27px] w-[104px]">
          <svg viewBox="0 0 20 18" className="h-[18px] w-5">
            <path d="M2 1h3v4l5-4 10 8-1.500 1.500-1-.8V18H3V9.700l-1.500.8L0 9l2-1.500z" />
            <path d="M5.500 8.500L10 4.500l5 4V16h-2.500v-5h-4v5h-3z" fill="#fff" />
          </svg>
          Startpunkt
        </PushButton>
        <PushButton className="ml-2 h-[27px] w-[115px]">Gehe zur Startpos.</PushButton>
        <span className="flex-1 pr-[7px] text-right">Starten von:</span>
        <Select
          label="Starten von"
          value="Absolute Koordinaten"
          className="h-[22px] w-40"
          selectClass="border-[#d8d8d8] border-b-[#bdbdbd] bg-[#fdfdfd] text-[#0a4a0a]"
        />
      </div>

      <div className="grid grid-cols-[234px_1fr] gap-y-[2px]">
        <div className="flex h-[54px] flex-col justify-between pt-[2px] pb-px">
          <Toggle label="Rotary aktivieren" off="red" />
          <Toggle label="Ausgewählte Grafiken ausschneiden" off="red" />
        </div>
        <div className="flex items-center justify-end">
          <span className="pr-[7px] whitespace-nowrap">Ausgangspos. des Auftrags</span>
          <RadioGrid name="Ausgangspos. des Auftrags" className="h-[54px] w-[158px] content-evenly" />
        </div>
        <Toggle label="Auswahlausgangspos. verwenden" dim />
        <PushButton className="h-[27px]">
          <svg viewBox="0 0 20 20" className="size-5" fill="none" stroke="#000" strokeWidth="2">
            <path d="M10 0v4M10 16v4M0 10h4M16 10h4" />
            <path d="M10 6v8M6 10h8" stroke="#f00" />
          </svg>
          Letzte Position anzeigen
        </PushButton>
        <Toggle label="Schnittpfad optimieren" on />
        <PushButton className="h-[27px]">Optimierungseinstellungen</PushButton>
      </div>

      <div className="mt-[2px] flex items-center gap-[7px]">
        <PushButton className="h-[27px] w-[91px]">Geräte</PushButton>
        <Select label="Gerät" value="(Auswählen)" className="h-[22px] flex-1" selectClass="border-[#d8d8d8] border-b-[#bdbdbd] bg-[#fdfdfd]" />
        <Select label="Profil" value="OLM3RB" className="h-[22px] flex-1" selectClass="border-[#d8d8d8] border-b-[#bdbdbd] bg-[#fdfdfd]" />
      </div>
    </div>
  </section>
);

const ColorBar: React.FC = () => (
  <div className="flex h-[31px] items-center border-t-2 border-white pl-[2px] font-['Liberation_Sans',sans-serif] text-[12px]">
    <Handle className="self-stretch" />
    <div className="ml-[9px] flex items-center gap-1">
      {PALETTE.map(([id, color], i) => (
        <button key={id} className={clsx('h-[22px] w-[22px]', color, i === 0 && 'outline-2 outline-[#a8d8f8]')}>{id}</button>
      ))}
      <div className="mx-px h-[22px] w-px bg-[#cfcfcf]" />
      {TOOL_COLORS.map(([id, color]) => (
        <button key={id} className={clsx('h-[22px] w-[22px]', color)}>{id}</button>
      ))}
    </div>
  </div>
);

const StatusBar: React.FC = () => (
  <footer className="mt-1 flex h-[21px] items-stretch text-[12px]">
    <div className="flex w-[63px] items-center border-r border-[#d4d4d4] pt-1"><Toggle label="Move" on /></div>
    <div className="flex w-[61px] items-center border-r border-[#d4d4d4] pt-1 pl-1"><Toggle label="Size" on /></div>
    <div className="flex w-[74px] items-center border-r border-[#d4d4d4] pt-1 pl-1"><Toggle label="Rotate" on /></div>
    <div className="flex w-[83px] items-center border-r border-[#d4d4d4] pt-1 pl-1"><Toggle label="Shear" on /></div>
    <div className="flex w-[629px] items-center border-r border-[#d4d4d4] pt-1 pl-1">x: 181.20, y: 45.70 mm</div>
    <div className="flex-1 border-r border-[#d4d4d4]" />
    <div className="w-[254px]" />
  </footer>
);

export default function App() {
  return (
    <div className="flex h-screen min-h-[1000px] min-w-[1900px] flex-col overflow-hidden bg-[#efefef] font-['Noto_Sans',sans-serif] text-black">
      <TitleBar />
      <MenuBar />
      <div className="flex h-[33px] items-center border-b border-[#b4b4b4] pl-[2px]">
        <Handle className="self-stretch" />
        <div className="ml-[6px] flex">
          <ToolGroups groups={MAIN_TOOLS} />
        </div>
        <div className="ml-[2px] w-px self-stretch bg-[#b4b4b4]" />
        <Handle className="ml-1 self-stretch" />
        <div className="ml-[6px] flex">
          <ToolGroups groups={ARRANGE_TOOLS} />
        </div>
      </div>
      <PropertyBar />
      <main className="flex min-h-0 flex-1">
        <SideBar />
        <WorkArea />
        <div className="w-[566px] shrink-0 pl-2">
          <CutsPanel />
          <LaserPanel />
        </div>
      </main>
      <ColorBar />
      <StatusBar />
      <div role="tooltip" className="fixed right-0 bottom-[14px] rounded-md bg-[#333] px-3 py-[7px] text-[14px] leading-6 text-white shadow-md">
        Desktop anzeigen
      </div>
    </div>
  );
}
